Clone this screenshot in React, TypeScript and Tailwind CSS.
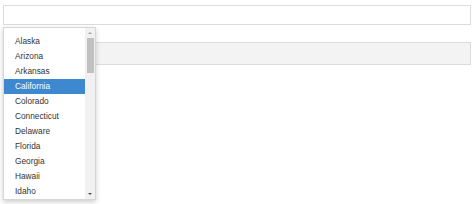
import React from 'react';

const states = ['Alaska', 'Arizona', 'Arkansas', 'California', 'Colorado', 'Connecticut', 'Delaware', 'Florida', 'Georgia', 'Hawaii', 'Idaho'];

export default function App() {
  return (
    <div className="relative w-[474px] h-[204px] bg-white font-['Liberation_Sans',Arial,sans-serif] text-[#333]">
      <div className="px-[3px] pt-[5px]">
        <div className="h-[20px] border border-[#dcdcdc] bg-white" />
        <div className="mt-[17px] h-[23px] border border-[#dcdcdc] bg-[#f3f3f3]" />
      </div>
      <div className="absolute left-[3px] top-[27px] w-[93px] h-[173px] bg-white border border-[#d6d6d6] shadow-[0_2px_5px_rgba(0,0,0,0.2)] flex">
        <ul className="flex-1 pt-[6px] text-[8.3px] leading-[15px]">
          {states.map((s) => (
            <li key={s} className={s === 'California' ? 'pl-[11px] bg-[#3d88cf] text-white' : 'pl-[11px]'}>
              {s}
            </li>
          ))}
        </ul>
        <div className="w-[10px] bg-[#f1f1f1] flex flex-col items-center">
          <svg width="10" height="10" viewBox="0 0 10 10" className="shrink-0">
            <path d="M3 6 L5 4 L7 6 Z" fill="#a3a3a3" />
          </svg>
          <div className="w-[7px] h-[35px] bg-[#c1c1c1]" />
          <div className="flex-1" />
          <svg width="10" height="10" viewBox="0 0 10 10" className="shrink-0">
            <path d="M3 4 L5 6 L7 4 Z" fill="#505050" />
          </svg>
        </div>
      </div>
    </div>
  );
}
